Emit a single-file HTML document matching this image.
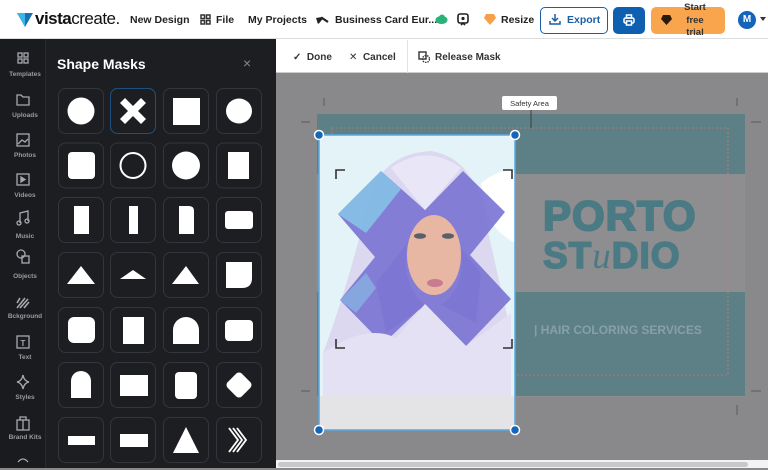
<!DOCTYPE html>
<html><head><meta charset="utf-8"><style>
*{margin:0;padding:0;box-sizing:border-box}
body{width:768px;height:468px;overflow:hidden;background:#89898b;font-family:"Liberation Sans",sans-serif;position:relative}
.a{position:absolute}
.top{left:0;top:0;width:768px;height:39px;background:#fff;border-bottom:1px solid #ddd}
.tb{font-size:10.5px;font-weight:bold;color:#222;top:14px}
.side{left:0;top:39px;width:276px;height:429px;background:#1d1e22}
.nav{left:0;top:39px;width:46px;height:429px;background:#1a1b1f;border-right:1px solid #2a2b30}
.lab{width:46px;text-align:center;color:#9a9ba0;font-size:6.5px;font-weight:bold}
.tool{left:276px;top:39px;width:492px;height:34px;background:#fff;border-bottom:1px solid #ccc}
.tt{font-size:10px;font-weight:bold;color:#333;top:52px}
</style></head><body>
<div class="a top"></div>
<svg class="a" style="left:17px;top:13px" width="16" height="14"><polygon points="0,0 16,0 8,14" fill="#1a6fb5"/><polygon points="0,0 8,0 8,14" fill="#39b8e8"/></svg>
<div class="a" style="left:35px;top:9px;font-size:17px;color:#111;letter-spacing:-0.5px"><b>vista</b>create.</div>
<div class="a tb" style="left:130px">New Design</div>
<svg class="a" style="left:200px;top:14px" width="11" height="11" fill="none" stroke="#333" stroke-width="1.5"><rect x="1" y="1" width="3.5" height="3.5"/><rect x="6.5" y="1" width="3.5" height="3.5"/><rect x="1" y="6.5" width="3.5" height="3.5"/><rect x="6.5" y="6.5" width="3.5" height="3.5"/></svg>
<div class="a tb" style="left:216px">File</div>
<div class="a tb" style="left:248px">My Projects</div>
<svg class="a" style="left:316px;top:15px" width="14" height="9"><path d="M2 8 L6 3 L12 7" stroke="#222" stroke-width="2.2" fill="none"/><polygon points="0,3 6,2 2,9" fill="#222"/></svg>
<div class="a tb" style="left:335px">Business Card Eur...</div>
<svg class="a" style="left:435px;top:14px" width="13" height="10"><ellipse cx="6.5" cy="6" rx="6" ry="4" fill="#2bb27a"/><circle cx="7" cy="3.5" r="3" fill="#2bb27a"/></svg>
<svg class="a" style="left:457px;top:13px" width="12" height="13" fill="none" stroke="#222" stroke-width="1.6"><rect x="1" y="1" width="10" height="9" rx="2"/><path d="M4 12 L6 10 L8 12"/><circle cx="6" cy="5.5" r="0.8" fill="#222"/></svg>
<svg class="a" style="left:484px;top:14px" width="12" height="11"><polygon points="2,0 10,0 12,4 6,11 0,4" fill="#f6a04b"/></svg>
<div class="a tb" style="left:501px">Resize</div>
<div class="a" style="left:540px;top:7px;width:68px;height:27px;border:1.5px solid #1a5fa6;border-radius:5px"></div>
<svg class="a" style="left:549px;top:13px" width="12" height="12" fill="none" stroke="#1a5fa6" stroke-width="1.5"><path d="M6 1 V8 M3 5 L6 8 L9 5 M1 8 V11 H11 V8"/></svg>
<div class="a" style="left:567px;top:14px;font-size:10.5px;font-weight:bold;color:#1a5fa6">Export</div>
<div class="a" style="left:613px;top:7px;width:32px;height:27px;background:#0e5fb0;border-radius:5px"></div>
<svg class="a" style="left:623px;top:14px" width="12" height="12" fill="none" stroke="#fff" stroke-width="1.5"><rect x="1" y="4" width="10" height="5" rx="1.5"/><rect x="3.5" y="1" width="5" height="3"/><rect x="3.5" y="7" width="5" height="4" fill="#0e5fb0"/></svg>
<div class="a" style="left:651px;top:7px;width:74px;height:27px;background:#f8a54e;border-radius:5px"></div>
<svg class="a" style="left:661px;top:15px" width="11" height="10"><polygon points="2,0 9,0 11,4 5.5,10 0,4" fill="#2a1a08"/></svg>
<div class="a" style="left:677px;top:2px;width:36px;text-align:center;font-size:9.5px;font-weight:bold;color:#333;line-height:12.5px">Start<br>free<br>trial</div>
<div class="a" style="left:738px;top:11px;width:18px;height:18px;border-radius:50%;background:#1464b8;color:#fff;font-size:10px;font-weight:bold;text-align:center;line-height:18px">M</div>
<div class="a" style="left:760px;top:17px;width:0;height:0;border-left:3px solid transparent;border-right:3px solid transparent;border-top:4px solid #333"></div>

<div class="a side"></div><div class="a nav"></div>
<div class="a" style="left:57px;top:56px;color:#fff;font-size:14px;font-weight:bold">Shape Masks</div>
<div class="a" style="left:243px;top:55px;color:#888;font-size:14px">×</div>

<svg class="a" style="left:0;top:50px" width="46" height="420" fill="none" stroke="#a8a9ae" stroke-width="1.3">
<rect x="18" y="3" width="4" height="4"/><rect x="24" y="3" width="4" height="4"/><rect x="18" y="9" width="4" height="4"/><rect x="24" y="9" width="4" height="4"/>
<path d="M17 45 V55 H29 V47 H23 L21 45 Z"/>
<rect x="17" y="84" width="12" height="12"/><path d="M18 94 L22 90 L25 92 L28 89" />
<rect x="17" y="124" width="12" height="11"/><path d="M21 127 V132 L25 129.5 Z" fill="#a8a9ae"/>
<path d="M20 173 V163 L28 161 V171"/><circle cx="19" cy="173" r="2"/><circle cx="27" cy="171" r="2"/>
<circle cx="21" cy="204" r="4"/><rect x="22" y="206" width="7" height="7"/>
<path d="M17 253 L20 248 M17 258 L25 248 M20 258 L28 249 M24 258 L29 252" stroke-width="1.6"/>
<rect x="17" y="286" width="12" height="12"/><text x="23" y="296" font-size="8" fill="#a8a9ae" stroke="none" text-anchor="middle" font-family="Liberation Sans" font-weight="bold">T</text>
<path d="M23 325 Q24 331 29 332 Q24 333 23 339 Q22 333 17 332 Q22 331 23 325Z"/>
<rect x="17" y="370" width="12" height="10"/><path d="M20 370 V367 H26 V370 M23 370 V380"/>
<path d="M18 412 Q23 406 28 412"/>
</svg>
<div class="a lab" style="left:2px;top:71px">Templates</div>
<div class="a lab" style="left:2px;top:112px">Uploads</div>
<div class="a lab" style="left:2px;top:152px">Photos</div>
<div class="a lab" style="left:2px;top:192px">Videos</div>
<div class="a lab" style="left:2px;top:233px">Music</div>
<div class="a lab" style="left:2px;top:273px">Objects</div>
<div class="a lab" style="left:2px;top:313px">Bckground</div>
<div class="a lab" style="left:2px;top:354px">Text</div>
<div class="a lab" style="left:2px;top:394px">Styles</div>
<div class="a lab" style="left:2px;top:434px">Brand Kits</div>

<svg class="a" style="left:0;top:0" width="276" height="468" fill="#fff">
<g fill="none" stroke="#35363c" stroke-width="1">
<g id="r"><rect x="58.5" y="88.5" width="45" height="45" rx="7"/><rect x="110.5" y="88.5" width="45" height="45" rx="7"/><rect x="163.5" y="88.5" width="45" height="45" rx="7"/><rect x="216.5" y="88.5" width="45" height="45" rx="7"/></g>
<use href="#r" y="54.5"/><use href="#r" y="109"/><use href="#r" y="164"/><use href="#r" y="219"/><use href="#r" y="274"/><use href="#r" y="329"/>
</g>
<rect x="110.5" y="88.5" width="45" height="45" rx="7" fill="none" stroke="#1f4f80"/>
<circle cx="81" cy="111" r="13.5"/>
<path d="M133 111 m-13 -8 l5 -5 l8 8 l8 -8 l5 5 l-8 8 l8 8 l-5 5 l-8 -8 l-8 8 l-5 -5 l8 -8z"/>
<rect x="173" y="98" width="27" height="27"/>
<ellipse cx="239" cy="111" rx="13" ry="12.5"/>
<rect x="68" y="152" width="27" height="27" rx="4"/>
<circle cx="133" cy="165.5" r="12.5" fill="none" stroke="#fff" stroke-width="2"/>
<circle cx="186" cy="165.5" r="14"/>
<rect x="228" y="152" width="21" height="27"/>
<rect x="74" y="206" width="15" height="28"/>
<rect x="129" y="206" width="9" height="28"/>
<path d="M179 206 H189 Q194 206 194 211 V234 H179Z"/>
<rect x="225" y="211" width="28" height="18" rx="3"/>
<polygon points="81,266 95,284 67,284"/>
<polygon points="133,270 146,279 120,279"/>
<polygon points="186,266 199,284 172,284"/>
<path d="M226 262 H252 V278 Q252 288 242 288 H226Z"/>
<rect x="68" y="317" width="27" height="26" rx="6"/>
<rect x="123" y="317" width="21" height="27"/>
<path d="M173 344 V330 A13 13 0 0 1 199 330 V344Z"/>
<rect x="225" y="320" width="28" height="21" rx="4"/>
<path d="M71 398 V381 A10 10 0 0 1 91 381 V398Z"/>
<rect x="120" y="375" width="28" height="21"/>
<rect x="175" y="372" width="22" height="27" rx="4"/>
<rect x="229" y="375" width="20" height="20" rx="4" transform="rotate(45 239 385)"/>
<rect x="68" y="436" width="27" height="9"/>
<rect x="120" y="434" width="28" height="13"/>
<polygon points="186,427 199,453 173,453"/>
<g fill="none" stroke="#fff" stroke-width="1.8"><path d="M229 428 L238 440 L229 452 M233 428 L242 440 L233 452 M237 428 L246 440 L237 452"/></g>
</svg>

<div class="a tool"></div>
<div class="a tt" style="left:293px">✓ &nbsp;Done</div>
<div class="a tt" style="left:349px"><span style="font-weight:normal">✕</span> &nbsp;Cancel</div>
<div class="a" style="left:407px;top:40px;width:1px;height:33px;background:#e3e3e3"></div>
<svg class="a" style="left:418px;top:51px" width="12" height="12" fill="none" stroke="#333" stroke-width="1.4"><rect x="1" y="1" width="7" height="7"/><circle cx="8" cy="8" r="3.5" stroke-dasharray="1.5 1"/></svg>
<div class="a tt" style="left:435px">Release Mask</div>

<svg class="a" style="left:276px;top:73px" width="492" height="395">
<g stroke="#5a5a5c" stroke-width="1"><path d="M48 25 V33 M461 25 V33 M25 49 H34 M475 49 H485 M25 318 H34 M475 318 H485 M461 332 V342 M48 332 V342"/></g>
<rect x="41" y="41" width="428" height="283" fill="#8e8d90"/>
<rect x="41" y="41" width="428" height="60" fill="#5d7f86"/>
<rect x="41" y="219" width="428" height="104" fill="#5d7f86"/>
<rect x="56" y="55" width="396" height="247" fill="none" stroke="#cc7777" stroke-width="0.8" stroke-dasharray="2 2"/>
<line x1="255" y1="37" x2="255" y2="55" stroke="#333" stroke-width="0.8"/>
<rect x="226" y="23" width="55" height="14" rx="2" fill="#fff"/>
<text x="253.5" y="33" font-size="7.5" text-anchor="middle" fill="#333" font-family="Liberation Sans">Safety Area</text>
<text x="267" y="157" font-size="42" font-weight="bold" fill="#4a7a83" stroke="#4a7a83" stroke-width="2" font-family="Liberation Sans" letter-spacing="1">PORTO</text>
<text x="267" y="195" font-size="37" font-weight="bold" fill="#4a7a83" stroke="#4a7a83" stroke-width="1.6" font-family="Liberation Sans" letter-spacing="1">ST<tspan font-style="italic" font-weight="normal" stroke-width="0" font-family="Liberation Serif">u</tspan>DIO</text>
<text x="258" y="261" font-size="12" font-weight="bold" fill="#86a1a6" font-family="Liberation Sans">| HAIR COLORING SERVICES</text>
<!-- photo -->
<rect x="43" y="62" width="196" height="261" fill="#e4f3f8"/>
<rect x="43" y="323" width="196" height="34" fill="#e4e4e6"/>
<path d="M205 110 Q225 95 239 98 V170 Q220 160 210 140Z" fill="#ffffff"/>
<path d="M95 120 Q110 80 155 78 Q200 85 210 150 L235 260 V323 H47 V280 Q70 220 95 120Z" fill="#dcd8f0"/>
<polygon points="105,98 149,137 187,98 229,139 194,182 235,226 190,273 149,231 107,271 64,227 99,184 62,141" fill="#7c75d2" opacity="0.92"/>
<polygon points="62,141 105,98 125,116 90,160" fill="#86cfe8" opacity="0.75"/>
<polygon points="64,227 90,200 100,215 80,240" fill="#86cfe8" opacity="0.5"/>
<path d="M115 95 Q150 70 185 95 L149 137Z" fill="#e9e7f7"/>
<ellipse cx="158" cy="182" rx="27" ry="40" fill="#e7b7a4"/>
<path d="M131 170 Q125 215 150 232 L110 260 L100 210Z" fill="#7c75d2" opacity="0.8"/>
<path d="M185 175 Q190 215 165 232 L200 250 L205 200Z" fill="#7c75d2" opacity="0.8"/>
<ellipse cx="144" cy="163" rx="6" ry="2.8" fill="#5a5f6a"/><ellipse cx="172" cy="163" rx="6" ry="2.8" fill="#5a5f6a"/>
<ellipse cx="159" cy="210" rx="8" ry="4" fill="#c97c8f"/>
<path d="M47 280 Q90 250 120 265 L149 231 L190 273 L235 240 V323 H47Z" fill="#e3e1f3"/>
<g fill="none" stroke="#333" stroke-width="1.6"><path d="M60 106 V97 H69 M227 97 H236 V106 M60 266 V275 H69 M236 266 V275 H227"/></g>
<rect x="43" y="62" width="196" height="295" fill="none" stroke="#5aa8e0" stroke-width="1.5"/>
<g fill="#1565b8" stroke="#fff" stroke-width="1.5"><circle cx="43" cy="62" r="4.5"/><circle cx="239" cy="62" r="4.5"/><circle cx="43" cy="357" r="4.5"/><circle cx="239" cy="357" r="4.5"/></g>
<rect x="0" y="387" width="492" height="8" fill="#f3f3f3"/>
<rect x="2" y="389" width="470" height="5" rx="2.5" fill="#c8c8c8"/>
</svg>
</body></html>
